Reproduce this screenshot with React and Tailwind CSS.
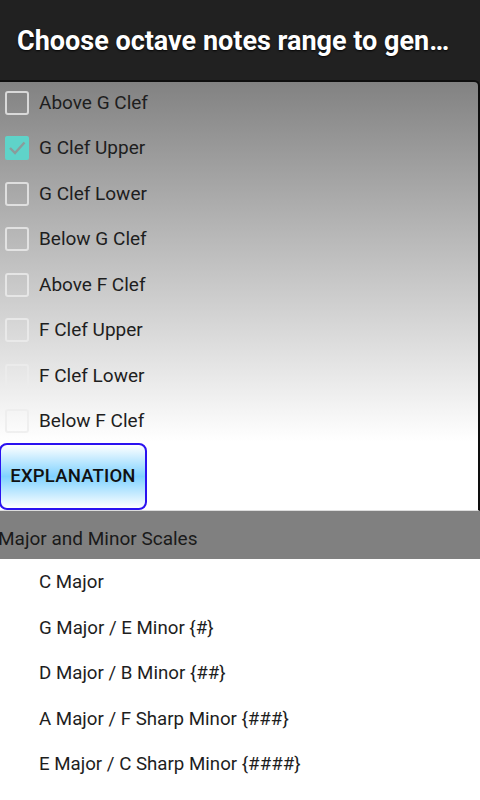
import React from "react";

const clefs = [
  { label: "Above G Clef", checked: false },
  { label: "G Clef Upper", checked: true },
  { label: "G Clef Lower", checked: false },
  { label: "Below G Clef", checked: false },
  { label: "Above F Clef", checked: false },
  { label: "F Clef Upper", checked: false },
  { label: "F Clef Lower", checked: false },
  { label: "Below F Clef", checked: false },
];

const scales = [
  "C Major",
  "G Major / E Minor {#}",
  "D Major / B Minor {##}",
  "A Major / F Sharp Minor {###}",
  "E Major / C Sharp Minor {####}",
];

function Box({ checked }) {
  if (checked) {
    return (
      <div className="w-[24px] h-[24px] rounded-[2px] bg-[#5fd3c9] flex items-center justify-center">
        <svg width="20" height="20" viewBox="0 0 20 20">
          <path d="M3 10 L8 15 L17.5 4.5" fill="none" stroke="#8a9c9b" strokeWidth="2.4" />
        </svg>
      </div>
    );
  }
  return <div className="w-[24px] h-[24px] rounded-[3px] border-2 border-[#ececec]/80" />;
}

export default function App() {
  return (
    <div className="w-[480px] h-[800px] overflow-hidden bg-[#212121] font-['Roboto',sans-serif]">
      <div className="h-[80px] flex items-center pl-[17px] pr-[8px] pt-[3px]">
        <div className="text-white text-[27px] font-bold whitespace-nowrap [text-shadow:0_1px_2px_rgba(0,0,0,0.9)]">
          Choose octave notes range to gen…
        </div>
      </div>
      <div className="h-[431px] border-t-2 border-r-2 border-[#0e0e0e] rounded-tr-[6px] bg-[linear-gradient(to_bottom,#828282_0%,#ffffff_84%,#ffffff_100%)] border-b border-b-[#dddddd]">
        <div className="flex flex-col -mt-[2px]">
          {clefs.map((c) => (
            <div key={c.label} className="h-[45.5px] flex items-center pl-[5px] gap-[10px]">
              <Box checked={c.checked} />
              <span className="text-[19px] text-[#1e1e1e]">{c.label}</span>
            </div>
          ))}
        </div>
        <div className="w-[148px] h-[67px] -ml-[1px] mt-[-1px] rounded-[8px] border-2 border-[#2a12f0] bg-[linear-gradient(to_bottom,#ffffff_0%,#7fd2ff_50%,#ffffff_100%)] flex items-center justify-center">
          <span className="text-[18.5px] font-medium text-[#111] tracking-[0.2px]">EXPLANATION</span>
        </div>
      </div>
      <div className="bg-white">
        <div className="h-[48px] bg-[#808080] flex items-center pt-[8px]">
          <span className="text-[19px] text-[#1a1a1a] -ml-[2px]">Major and Minor Scales</span>
        </div>
        <div className="flex flex-col">
          {scales.map((s) => (
            <div key={s} className="h-[45.5px] flex items-center pl-[39px] pt-[1px]">
              <span className="text-[18.7px] text-[#1e1e1e]">{s}</span>
            </div>
          ))}
        </div>
        <div className="h-[20px]" />
      </div>
    </div>
  );
}
